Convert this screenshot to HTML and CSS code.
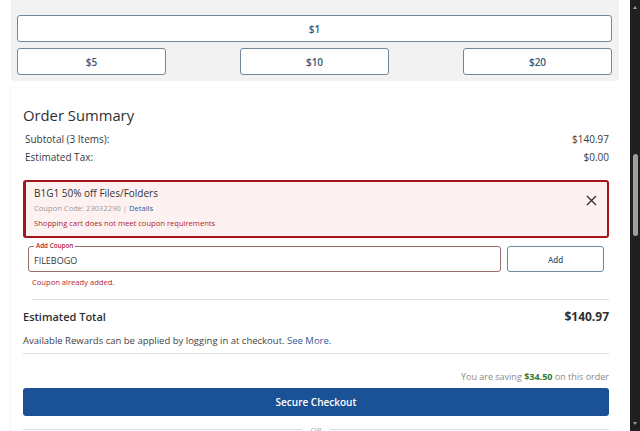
FILE: index.html
```html
<!DOCTYPE html>
<html>
<head>
    <title>Cart - Order Summary</title>
    <link rel="stylesheet" href="styles.css">
</head>
<body>
    <div class="window">
        <div class="page">
            <div class="gift-panel">
                <button class="amount-btn">$1</button>
                <div class="amount-row">
                    <button class="amount-btn small">$5</button>
                    <button class="amount-btn small">$10</button>
                    <button class="amount-btn small">$20</button>
                </div>
            </div>

            <div class="summary-card">
                <h2 class="summary-title">Order Summary</h2>
                <div class="summary-line">
                    <span>Subtotal (3 Items):</span>
                    <span>$140.97</span>
                </div>
                <div class="summary-line">
                    <span>Estimated Tax:</span>
                    <span>$0.00</span>
                </div>

                <div class="coupon-alert">
                    <div class="coupon-info">
                        <div class="coupon-name">B1G1 50% off Files/Folders</div>
                        <div class="coupon-code">Coupon Code: 23032290 | <a href="#">Details</a></div>
                        <div class="coupon-error">Shopping cart does not meet coupon requirements</div>
                    </div>
                    <button class="close-btn" aria-label="Remove coupon">
                        <svg width="11" height="11" viewBox="0 0 11 11">
                            <path d="M1 1 L10 10 M10 1 L1 10" stroke="#333" stroke-width="1.4" fill="none"/>
                        </svg>
                    </button>
                </div>

                <div class="coupon-form">
                    <div class="coupon-field">
                        <label for="coupon">Add Coupon</label>
                        <input id="coupon" type="text" value="FILEBOGO">
                    </div>
                    <button class="add-btn">Add</button>
                </div>
                <div class="field-error">Coupon already added.</div>

                <div class="total-line">
                    <span>Estimated Total</span>
                    <span class="total-amount">$140.97</span>
                </div>
                <p class="rewards">Available Rewards can be applied by logging in at checkout. <a href="#">See More.</a></p>

                <p class="saving">You are saving <strong>$34.50</strong> on this order</p>
                <button class="checkout-btn">Secure Checkout</button>
                <div class="or-line"><span>OR</span></div>
            </div>
        </div>

        <div class="scrollbar">
            <span class="arrow up"></span>
            <div class="track"><div class="thumb"></div></div>
            <span class="arrow down"></span>
        </div>
    </div>
</body>
</html>
```

FILE: styles.css
```css
html, body {
    margin: 0;
    height: 100%;
    overflow: hidden;
}
body {
    font-family: "Open Sans", "Noto Sans", sans-serif;
    color: #333;
    background: #fff;
}
a {
    color: #2b5d99;
    text-decoration: none;
}
button {
    font-family: inherit;
    cursor: pointer;
}
.window {
    display: flex;
    height: 431px;
}
.page {
    flex: 1;
    padding: 0 11px;
}

/* gift card amounts */
.gift-panel {
    background: #f2f2f2;
    padding: 15px 7px 6px 6px;
    border-radius: 0 0 4px 4px;
    display: flex;
    flex-direction: column;
    gap: 6px;
}
.amount-btn {
    height: 27px;
    background: #fff;
    border: 1px solid #71879b;
    border-radius: 3px;
    color: #3b5876;
    font-size: 10px;
    font-weight: 600;
    padding: 0;
}
.amount-row {
    display: flex;
    justify-content: space-between;
}
.amount-btn.small {
    width: 149px;
}

/* summary */
.summary-card {
    margin-top: 7px;
    padding: 17px 10px 0 12px;
    box-shadow: -1px 0 2px rgba(0,0,0,0.04);
}
.summary-title {
    font-size: 14.8px;
    font-weight: 400;
    margin: 0 0 5px;
    line-height: 20px;
    color: #2f2f2f;
}
.summary-line {
    display: flex;
    justify-content: space-between;
    font-size: 10px;
    line-height: 18px;
    color: #3a3a3a;
    padding: 0 0 0 2px;
}
.coupon-alert {
    margin-top: 14px;
    display: flex;
    justify-content: space-between;
    border: 2px solid #a8121d;
    border-left-width: 3px;
    border-radius: 3px;
    background: #fdf2f1;
    padding: 3px 10px 6px 8px;
}
.coupon-name {
    font-size: 10px;
    line-height: 16px;
    color: #333;
}
.coupon-code {
    font-size: 7.6px;
    line-height: 15px;
    color: #9a9a9a;
}
.coupon-error {
    font-size: 7.6px;
    line-height: 14px;
    color: #b0242c;
}
.close-btn {
    background: none;
    border: none;
    padding: 0;
    margin-top: 7px;
    height: 12px;
}
.coupon-form {
    display: flex;
    gap: 6px;
    margin: 8px 5px 0 5px;
}
.coupon-field {
    flex: 1;
    position: relative;
    display: flex;
    align-items: center;
    height: 24px;
    border: 1px solid #9a6b6b;
    border-radius: 3px;
    padding: 0 5px;
}
.coupon-field label {
    position: absolute;
    top: -5px;
    left: 5px;
    font-size: 6.3px;
    font-weight: 600;
    color: #b0242c;
    padding: 0 2px;
    line-height: 8px;
    background: #fff;
}
.coupon-field input {
    border: none;
    outline: none;
    font-family: inherit;
    font-size: 9px;
    color: #333;
    padding: 0;
    margin-top: 2px;
    width: 100%;
    background: transparent;
}
.add-btn {
    width: 97px;
    height: 26px;
    background: #fff;
    border: 1px solid #71879b;
    border-radius: 3px;
    color: #3b5876;
    font-size: 8px;
    font-weight: 600;
}
.field-error {
    font-size: 7.6px;
    color: #b0242c;
    margin: 5px 0 0 9px;
    padding-bottom: 12px;
    border-bottom: 1px solid #dedede;
}
.total-line {
    display: flex;
    justify-content: space-between;
    align-items: center;
    margin-top: 8px;
    font-size: 11px;
    font-weight: 600;
    color: #2f2f2f;
}
.total-amount {
    font-size: 12px;
    font-weight: 700;
}
.rewards {
    font-size: 9.5px;
    color: #444;
    margin: 9px 0 0;
    padding-bottom: 6px;
    border-bottom: 1px solid #dedede;
}
.saving {
    text-align: right;
    font-size: 9px;
    color: #8a8a8a;
    margin: 16px 0 5px;
}
.saving strong {
    color: #2f7a32;
}
.checkout-btn {
    width: 100%;
    height: 28px;
    border: none;
    border-radius: 3px;
    background: #1b5196;
    color: #fff;
    font-size: 10px;
    font-weight: 600;
}
.or-line {
    display: flex;
    align-items: center;
    gap: 8px;
    margin-top: 8px;
    font-size: 8px;
    color: #aaa;
}
.or-line::before, .or-line::after {
    content: "";
    flex: 1;
    border-top: 1px solid #dedede;
}

/* fake browser scrollbar */
.scrollbar {
    width: 10px;
    background: #1f1f1f;
    display: flex;
    flex-direction: column;
    align-items: center;
}
.arrow {
    width: 0;
    height: 0;
    border-left: 2px solid transparent;
    border-right: 2px solid transparent;
    margin: 6px 0;
}
.arrow.up {
    border-bottom: 3px solid #9a9a9a;
}
.arrow.down {
    border-top: 3px solid #9a9a9a;
}
.track {
    flex: 1;
    width: 100%;
    display: flex;
    justify-content: center;
}
.thumb {
    width: 5px;
    height: 82px;
    margin-top: 139px;
    background: #9e9e9e;
    border-radius: 3px;
}
```
